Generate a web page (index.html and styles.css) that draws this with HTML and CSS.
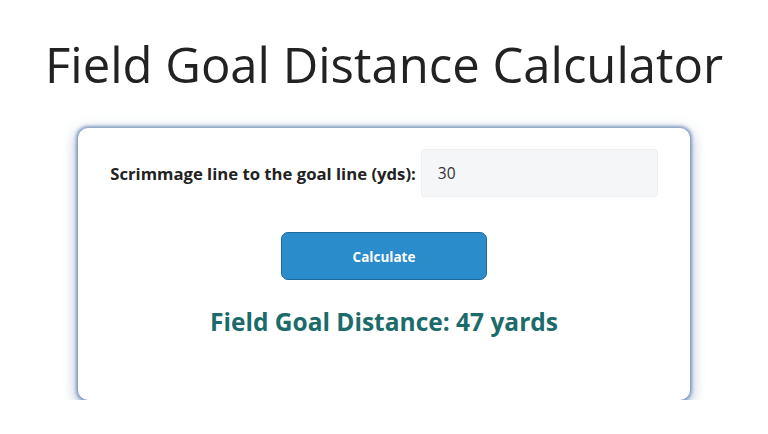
FILE: index.html
```html
<!DOCTYPE html>
<html lang="en">
<head>
<meta charset="utf-8">
<title>Field Goal Distance Calculator</title>
<link rel="stylesheet" href="styles.css">
</head>
<body>
<h1 class="title">Field Goal Distance Calculator</h1>
<div class="card">
  <div class="row">
    <label class="label" for="yds">Scrimmage line to the goal line (yds):</label>
    <input class="input" id="yds" type="text" value="30">
  </div>
  <button class="btn" type="button">Calculate</button>
  <div class="result">Field Goal Distance: 47 yards</div>
</div>
</body>
</html>
```
FILE: styles.css
```css
html, body {
  margin: 0;
  padding: 0;
  background: #ffffff;
}
body {
  font-family: "Open Sans", "Noto Sans", sans-serif;
  color: #222222;
}
.title {
  margin: 0;
  padding-top: 32px;
  text-align: center;
  font-weight: 400;
  font-size: 49px;
  line-height: 64px;
  color: #222222;
  letter-spacing: 0;
}
.card {
  box-sizing: border-box;
  width: 612px;
  height: 272px;
  margin: 32px auto 0;
  padding: 21px 30px 0;
  background: #ffffff;
  border-radius: 10px;
  box-shadow: 0 0 3px 2px rgba(95, 130, 175, 0.7), 0 4px 14px 2px rgba(80, 115, 165, 0.45);
  display: flex;
  flex-direction: column;
  align-items: center;
}
.row {
  display: flex;
  align-items: center;
  gap: 5px;
}
.label {
  font-weight: 700;
  font-size: 16.7px;
  color: #222222;
}
.input {
  box-sizing: border-box;
  width: 237px;
  height: 48px;
  border: 1px solid #eeeff1;
  border-radius: 3px;
  background: #f5f6f8;
  padding: 0 16px;
  font-family: inherit;
  font-size: 15.5px;
  color: #333333;
  outline: none;
}
.btn {
  box-sizing: border-box;
  margin-top: 35px;
  width: 206px;
  height: 48px;
  border: 1px solid #1f6a9c;
  border-radius: 7px;
  background: #2a8ccb;
  color: #ffffff;
  font-family: inherit;
  font-weight: 700;
  font-size: 13.5px;
  padding-top: 2px;
  cursor: pointer;
}
.result {
  margin-top: 25px;
  font-weight: 700;
  font-size: 24.5px;
  color: #1c6b6b;
}
```
